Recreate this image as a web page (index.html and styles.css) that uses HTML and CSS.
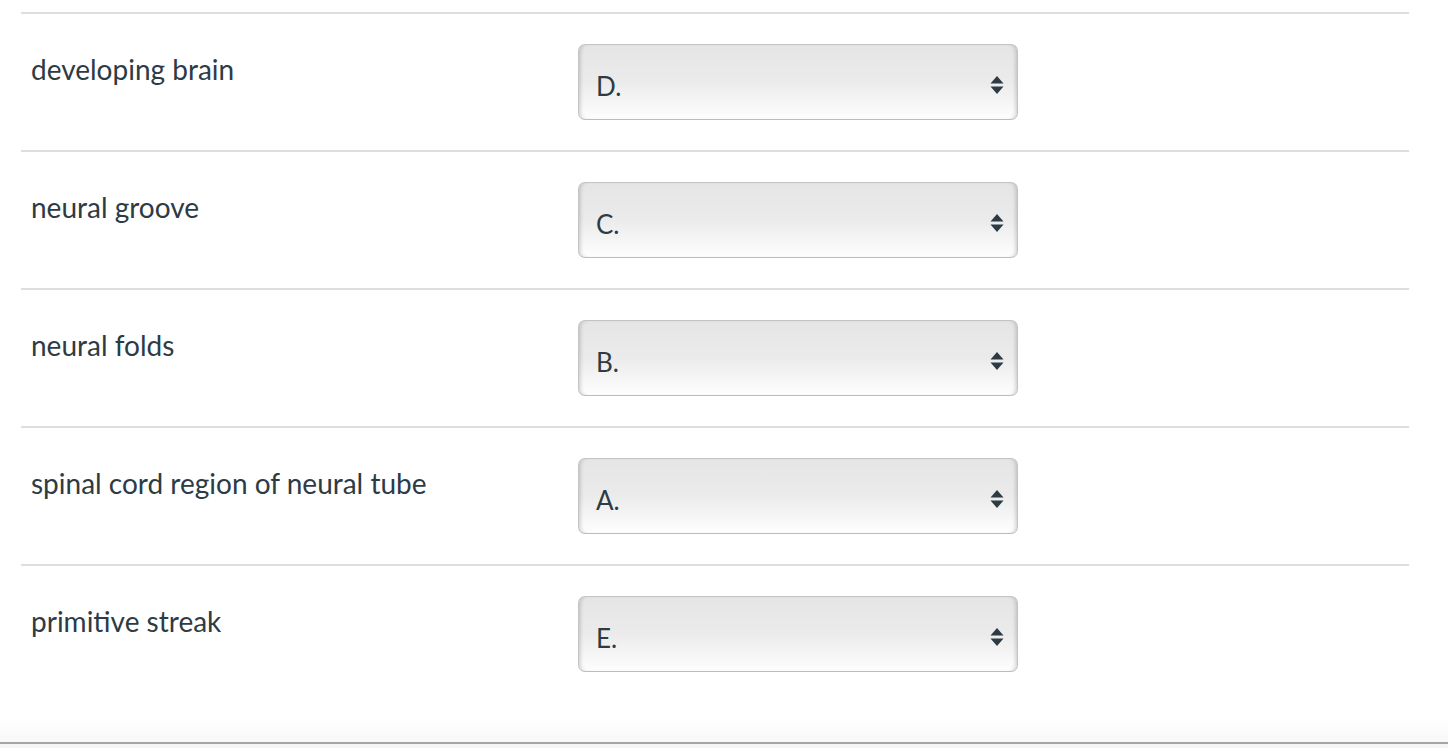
FILE: index.html
```html
<!DOCTYPE html>
<html>
<head>
<meta charset="utf-8">
<link rel="stylesheet" href="styles.css">
</head>
<body>
<div class="page">
  <div class="list">
    <div class="row">
      <div class="label">developing brain</div>
      <div class="select"><span class="val">D.</span>
        <svg class="arrows" width="14" height="18" viewBox="0 0 14 18"><path d="M7 0 L13.5 7.5 L0.5 7.5 Z M0.5 10.5 L13.5 10.5 L7 18 Z" fill="#2d3b45"/></svg>
      </div>
    </div>
    <div class="row">
      <div class="label">neural groove</div>
      <div class="select"><span class="val">C.</span>
        <svg class="arrows" width="14" height="18" viewBox="0 0 14 18"><path d="M7 0 L13.5 7.5 L0.5 7.5 Z M0.5 10.5 L13.5 10.5 L7 18 Z" fill="#2d3b45"/></svg>
      </div>
    </div>
    <div class="row">
      <div class="label">neural folds</div>
      <div class="select"><span class="val">B.</span>
        <svg class="arrows" width="14" height="18" viewBox="0 0 14 18"><path d="M7 0 L13.5 7.5 L0.5 7.5 Z M0.5 10.5 L13.5 10.5 L7 18 Z" fill="#2d3b45"/></svg>
      </div>
    </div>
    <div class="row">
      <div class="label">spinal cord region of neural tube</div>
      <div class="select"><span class="val">A.</span>
        <svg class="arrows" width="14" height="18" viewBox="0 0 14 18"><path d="M7 0 L13.5 7.5 L0.5 7.5 Z M0.5 10.5 L13.5 10.5 L7 18 Z" fill="#2d3b45"/></svg>
      </div>
    </div>
    <div class="row">
      <div class="label">primitive streak</div>
      <div class="select"><span class="val">E.</span>
        <svg class="arrows" width="14" height="18" viewBox="0 0 14 18"><path d="M7 0 L13.5 7.5 L0.5 7.5 Z M0.5 10.5 L13.5 10.5 L7 18 Z" fill="#2d3b45"/></svg>
      </div>
    </div>
  </div>
  <div class="fade"></div>
  <div class="footer"></div>
</div>
</body>
</html>
```

FILE: styles.css
```css
html, body {
  margin: 0;
  padding: 0;
  background: #ffffff;
}
body {
  font-family: Lato, "Liberation Sans", sans-serif;
  color: #2d3b45;
}
.page {
  height: 748px;
  display: flex;
  flex-direction: column;
}
.list {
  padding-top: 12px;
  margin-left: 21px;
  width: 1388px;
}
.row {
  height: 136px;
  border-top: 2px solid #dedede;
  display: flex;
  align-items: flex-start;
}
.label {
  width: 547px;
  padding-left: 10px;
  margin-top: 37px;
  font-size: 28px;
  line-height: 36px;
}
.select {
  margin-top: 30px;
  width: 408px;
  height: 66px;
  border: 1px solid #c4c4c4;
  border-bottom-color: #bdbdbd;
  border-radius: 7px;
  background: linear-gradient(to bottom, #e5e5e5 0%, #ebebeb 50%, #fefefe 100%);
  box-shadow: inset 4px 0 4px -3px rgba(0,0,0,0.2), inset -4px 0 4px -3px rgba(0,0,0,0.2);
  display: flex;
  align-items: center;
  justify-content: space-between;
  padding: 8px 13px 0 17px;
}
.val {
  font-size: 26px;
}
.arrows {
  display: block;
  margin-top: -3px;
}
.fade {
  flex: 1;
  background: linear-gradient(to bottom, #ffffff 0%, #ffffff 40%, #f8f8f8 100%);
}
.footer {
  height: 2px;
  background: #a5a5a5;
  border-bottom: 4px solid #f5f5f5;
}
```
